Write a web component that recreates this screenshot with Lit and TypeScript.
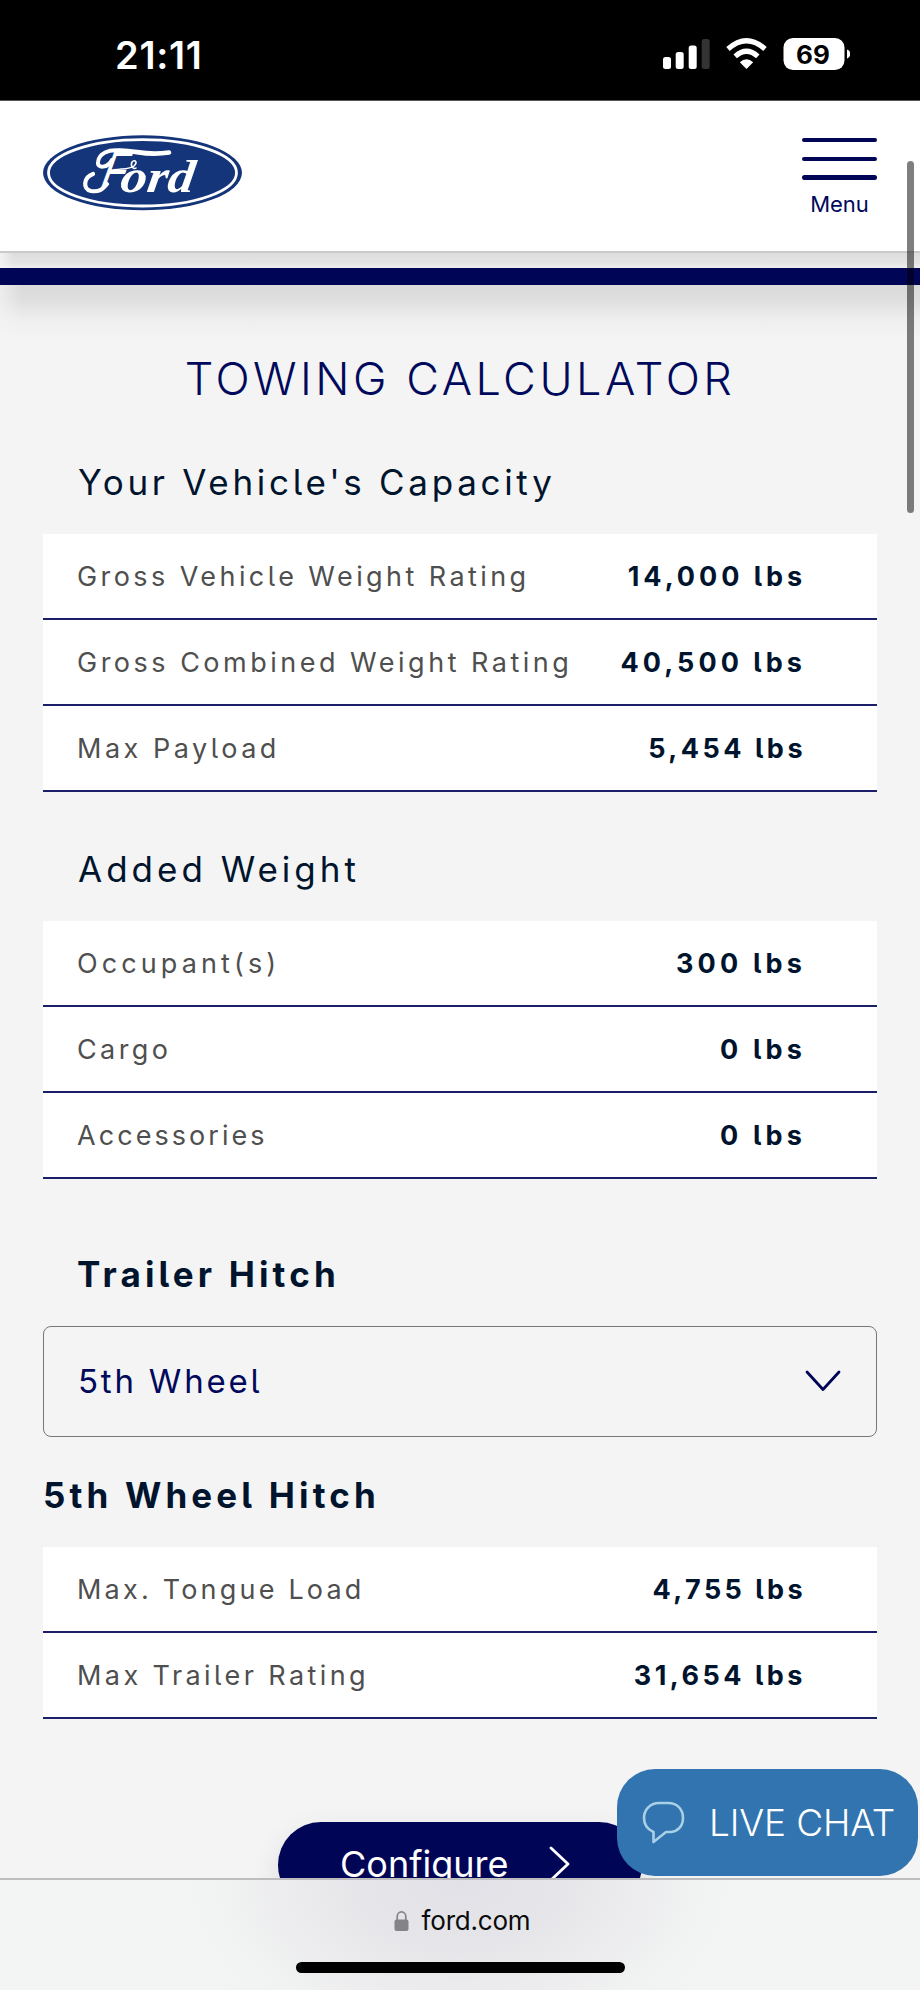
import { LitElement, html, css, svg } from 'lit';
import { customElement, property } from 'lit/decorators.js';

interface Row {
  label: string;
  value: string;
  lt: number;
  vt: number;
}

const capacity: Row[] = [
  { label: 'Gross Vehicle Weight Rating', value: '14,000 lbs', lt: 3.42, vt: 3.95 },
  { label: 'Gross Combined Weight Rating', value: '40,500 lbs', lt: 3.5, vt: 4.05 },
  { label: 'Max Payload', value: '5,454 lbs', lt: 3.5, vt: 3.5 },
];
const added: Row[] = [
  { label: 'Occupant(s)', value: '300 lbs', lt: 4.1, vt: 4.2 },
  { label: 'Cargo', value: '0 lbs', lt: 3.4, vt: 4.2 },
  { label: 'Accessories', value: '0 lbs', lt: 3.05, vt: 4.2 },
];
const hitch: Row[] = [
  { label: 'Max. Tongue Load', value: '4,755 lbs', lt: 3.2, vt: 3.45 },
  { label: 'Max Trailer Rating', value: '31,654 lbs', lt: 3.42, vt: 3.5 },
];

@customElement('weight-table')
class WeightTable extends LitElement {
  @property({ attribute: false }) rows: Row[] = [];

  static styles = css`
    :host { display: block; background: #fff; }
    .row {
      box-sizing: border-box;
      height: 86px;
      border-bottom: 2px solid #1a1f68;
      display: flex;
      align-items: center;
      justify-content: space-between;
      padding: 0 71px 0 34px;
      font-family: Inter, sans-serif;
      font-size: 27px;
      white-space: nowrap;
      font-feature-settings: 'cv05';
    }
    .label { color: #4f4f4f; }
    .value { font-weight: 700; color: #00142e; }
  `;

  render() {
    return this.rows.map(
      (r) => html`<div class="row">
        <span class="label" style="letter-spacing:${r.lt}px">${r.label}</span>
        <span class="value" style="letter-spacing:${r.vt}px">${r.value}</span>
      </div>`
    );
  }
}

const logo = svg`<svg class="logo" width="200" height="76" viewBox="0 0 200 76">
  <ellipse cx="99.5" cy="37.8" rx="99.5" ry="37.5" fill="#15357a"/>
  <ellipse cx="99.5" cy="37.8" rx="94" ry="33.2" fill="none" stroke="#fff" stroke-width="2.8"/>
  <g fill="none" stroke="#fff" stroke-linecap="round" stroke-linejoin="round">
    <path d="M69 25C65 33 54 34 55 27C56 18 66 14.500 76 15.500" stroke-width="4"/>
    <path d="M76 15.500C94 15 101 21.500 126 17.500" stroke-width="4.600"/>
    <path d="M50 39C41 42 39 54 48 56C56 57 59 55 64 49" stroke-width="4.200"/>
    <path d="M66 36C76 33 86 35 91 31C95 27 92 24 89 27C87 31 91 35 93 33" stroke-width="1.600"/>
  </g>
  <text class="initial" transform="translate(54.500 54) skewX(-20)" font-size="54" textLength="24" lengthAdjust="spacingAndGlyphs">F</text>
  <text class="script" transform="translate(76 57) skewX(-8)" font-size="46" textLength="74" lengthAdjust="spacingAndGlyphs">ord</text>
</svg>`;

@customElement('app-root')
class AppRoot extends LitElement {
  static styles = css`
    :host {
      position: relative;
      display: flex;
      flex-direction: column;
      width: 920px;
      height: 1990px;
      overflow: hidden;
      background: #f4f4f4;
      font-family: Inter, sans-serif;
      white-space: nowrap;
    }
    svg { display: block; flex: none; }
    .status {
      box-sizing: border-box;
      height: 101px;
      background: #000;
      border-bottom: 1px solid #555;
      display: flex;
      align-items: center;
      padding: 9px 70px 0 115px;
      color: #fff;
    }
    .time { font-size: 38px; font-weight: 600; letter-spacing: 0.7px; margin-right: auto; }
    .battery-text { font-size: 26px; font-weight: 700; font-family: Inter, sans-serif; }
    .header {
      box-sizing: border-box;
      height: 152px;
      background: #fff;
      border-bottom: 2px solid #cacaca;
      display: flex;
      justify-content: space-between;
      padding: 34px 43px 0;
    }
    .initial { font-family: 'Liberation Sans', sans-serif; font-weight: 400; fill: #fff; }
    .script { font-family: 'Liberation Serif', serif; font-style: italic; font-weight: 700; fill: #fff; }
    .menu {
      width: 75px;
      padding-top: 3px;
      display: flex;
      flex-direction: column;
      align-items: center;
      color: #00095b;
    }
    .bar { width: 75px; height: 4.4px; border-radius: 3px; background: #000556; margin-bottom: 14.2px; }
    .menu-label { font: 400 22px/28px Inter, sans-serif; margin-top: -3.5px; }
    .main { flex: 1; min-height: 0; overflow: hidden; display: flex; flex-direction: column; }
    .shade { height: 15px; flex: none; background: linear-gradient(90deg, rgba(244,244,244,.9), rgba(244,244,244,0) 14px), linear-gradient(#dedede, #e3e3e3 60%, #efefef); }
    .navy { height: 17px; flex: none; background: #000556; }
    .content {
      flex: none;
      display: flex;
      flex-direction: column;
      padding: 64px 43px 0;
      background: linear-gradient(90deg, rgba(244,244,244,.7), rgba(244,244,244,0) 22px), linear-gradient(#dadada, #dedede 14px, #eeeeee 34px, #f4f4f4 54px);
    }
    .title {
      margin: 0 0 48px;
      font-size: 45px;
      line-height: 60px;
      font-weight: 300;
      letter-spacing: 3.5px;
      text-align: center;
      color: #00095b;
    }
    .sub {
      margin: 0 0 27px;
      padding-left: 35px;
      font: 400 35px/50px Inter, sans-serif;
      letter-spacing: 3.7px;
      color: #00142e;
      font-feature-settings: 'cv05';
    }
    .second { margin-top: 52px; letter-spacing: 4px; }
    .strong { font-weight: 700; letter-spacing: 4.15px; }
    .trailer { margin-top: 70px; padding-left: 34px; }
    .wheel { margin-top: 33px; padding-left: 0; }
    .select {
      box-sizing: border-box;
      height: 111px;
      border: 1px solid #777;
      border-radius: 8px;
      display: flex;
      align-items: center;
      justify-content: space-between;
      padding: 0 35px 1px 34px;
      font-size: 33px;
      letter-spacing: 2.8px;
      color: #00095b;
      font-feature-settings: 'cv05';
    }
    .configure {
      box-sizing: border-box;
      align-self: flex-start;
      margin: 103px 0 0 235px;
      width: 364px;
      height: 86px;
      border-radius: 43px;
      background: #000556;
      color: #fff;
      display: flex;
      align-items: center;
      gap: 40px;
      padding: 0 0 2px 62px;
      font: 400 36px/50px Inter, sans-serif;
      box-shadow: 0 12px 30px rgba(0, 0, 0, 0.1);
    }
    .toolbar {
      box-sizing: border-box;
      height: 112px;
      border-top: 2px solid #bdbdc0;
      background: radial-gradient(ellipse 290px 190px at 460px 0, #e1e1e7 0, #e5e5e9 30%, #ececee 60%, #f1f2f2 82%, rgba(243,244,244,0) 100%), #f3f4f4;
      display: flex;
      flex-direction: column;
      align-items: center;
    }
    .address { display: flex; align-items: center; gap: 13px; height: 81px; padding: 0 0 1px 4px; font-size: 26px; letter-spacing: -0.2px; color: #0b0b0b; }
    .home { width: 329px; height: 11px; border-radius: 6px; background: #000; }
    .chat {
      position: absolute;
      left: 617px;
      top: 1769px;
      width: 301px;
      height: 107px;
      border-radius: 38px;
      background: #3174af;
      color: #fff;
      display: flex;
      align-items: center;
      font-size: 37px;
      font-weight: 300;
      letter-spacing: -0.15px;
    }
    .scroll {
      position: absolute;
      left: 907px;
      top: 161px;
      width: 7px;
      height: 352px;
      border-radius: 4px;
      background: rgba(0, 0, 0, 0.5);
    }
  `;

  render() {
    return html`
      <div class="status">
        <span class="time">21:11</span>
        <svg width="190" height="36" viewBox="0 0 190 36">
          <g fill="#fff">
            <rect x="3" y="20" width="8" height="12" rx="2.500"/>
            <rect x="15.700" y="15" width="8" height="17" rx="2.500"/>
            <rect x="28.700" y="8.500" width="8" height="23.500" rx="2.500"/>
            <rect x="41.700" y="2" width="8" height="30" rx="2.500" fill="#333"/>
            <path d="M86.500 32 79.800 25.300Q86.500 19.400 93.200 25.300Z"/>
            <rect x="123.500" y="1" width="61" height="32" rx="9.500"/>
            <path d="M187 12.500C191.500 14 191.500 20 187 21.500Z"/>
          </g>
          <g fill="none" stroke="#fff" stroke-width="5.200">
            <path d="M68 12Q86.500 -4.500 105 12"/>
            <path d="M75.200 19.400Q86.500 9.200 97.800 19.400"/>
          </g>
          <text class="battery-text" x="153" y="26.500" text-anchor="middle" fill="#000">69</text>
        </svg>
      </div>
      <div class="header">
        ${logo}
        <div class="menu">
          <div class="bar"></div>
          <div class="bar"></div>
          <div class="bar"></div>
          <span class="menu-label">Menu</span>
        </div>
      </div>
      <div class="main">
        <div class="shade"></div>
        <div class="navy"></div>
        <div class="content">
          <h1 class="title">TOWING CALCULATOR</h1>
          <h2 class="sub">Your Vehicle's Capacity</h2>
          <weight-table .rows=${capacity}></weight-table>
          <h2 class="sub second">Added Weight</h2>
          <weight-table .rows=${added}></weight-table>
          <h2 class="sub strong trailer">Trailer Hitch</h2>
          <div class="select">
            <span>5th Wheel</span>
            <svg width="36" height="22" viewBox="0 0 36 22"><path d="M2 2 18 19.500 34 2" fill="none" stroke="#000556" stroke-width="2.800" stroke-linecap="round" stroke-linejoin="round"/></svg>
          </div>
          <h2 class="sub strong wheel">5th Wheel Hitch</h2>
          <weight-table .rows=${hitch}></weight-table>
          <div class="configure">
            <span>Configure</span>
            <svg width="22" height="38" viewBox="0 0 22 38"><path d="M2 3 19 19 2 35" fill="none" stroke="#fff" stroke-width="2.800" stroke-linecap="round" stroke-linejoin="round"/></svg>
          </div>
        </div>
      </div>
      <div class="toolbar">
        <div class="address">
          <svg width="15" height="20" viewBox="0 0 15 20"><rect x=".5" y="8.500" width="14" height="11.500" rx="2" fill="#838388"/><path d="M3.200 9V5.500a4.300 4.600 0 0 1 8.600 0V9" fill="none" stroke="#838388" stroke-width="1.700"/></svg>
          <span>ford.com</span>
        </div>
        <div class="home"></div>
      </div>
      <div class="chat">
        <svg width="92" height="107" viewBox="0 0 92 107"><path d="M42 34H51C61 34 66 41 66 49C66 58 60 62.500 54 63H49L36.500 73V63C31 60.500 27 56 27 49C27 40 34 34 42 34Z" fill="none" stroke="#a9d0e6" stroke-width="2.600" stroke-linejoin="round"/></svg>
        <span>LIVE CHAT</span>
      </div>
      <div class="scroll"></div>
    `;
  }
}
